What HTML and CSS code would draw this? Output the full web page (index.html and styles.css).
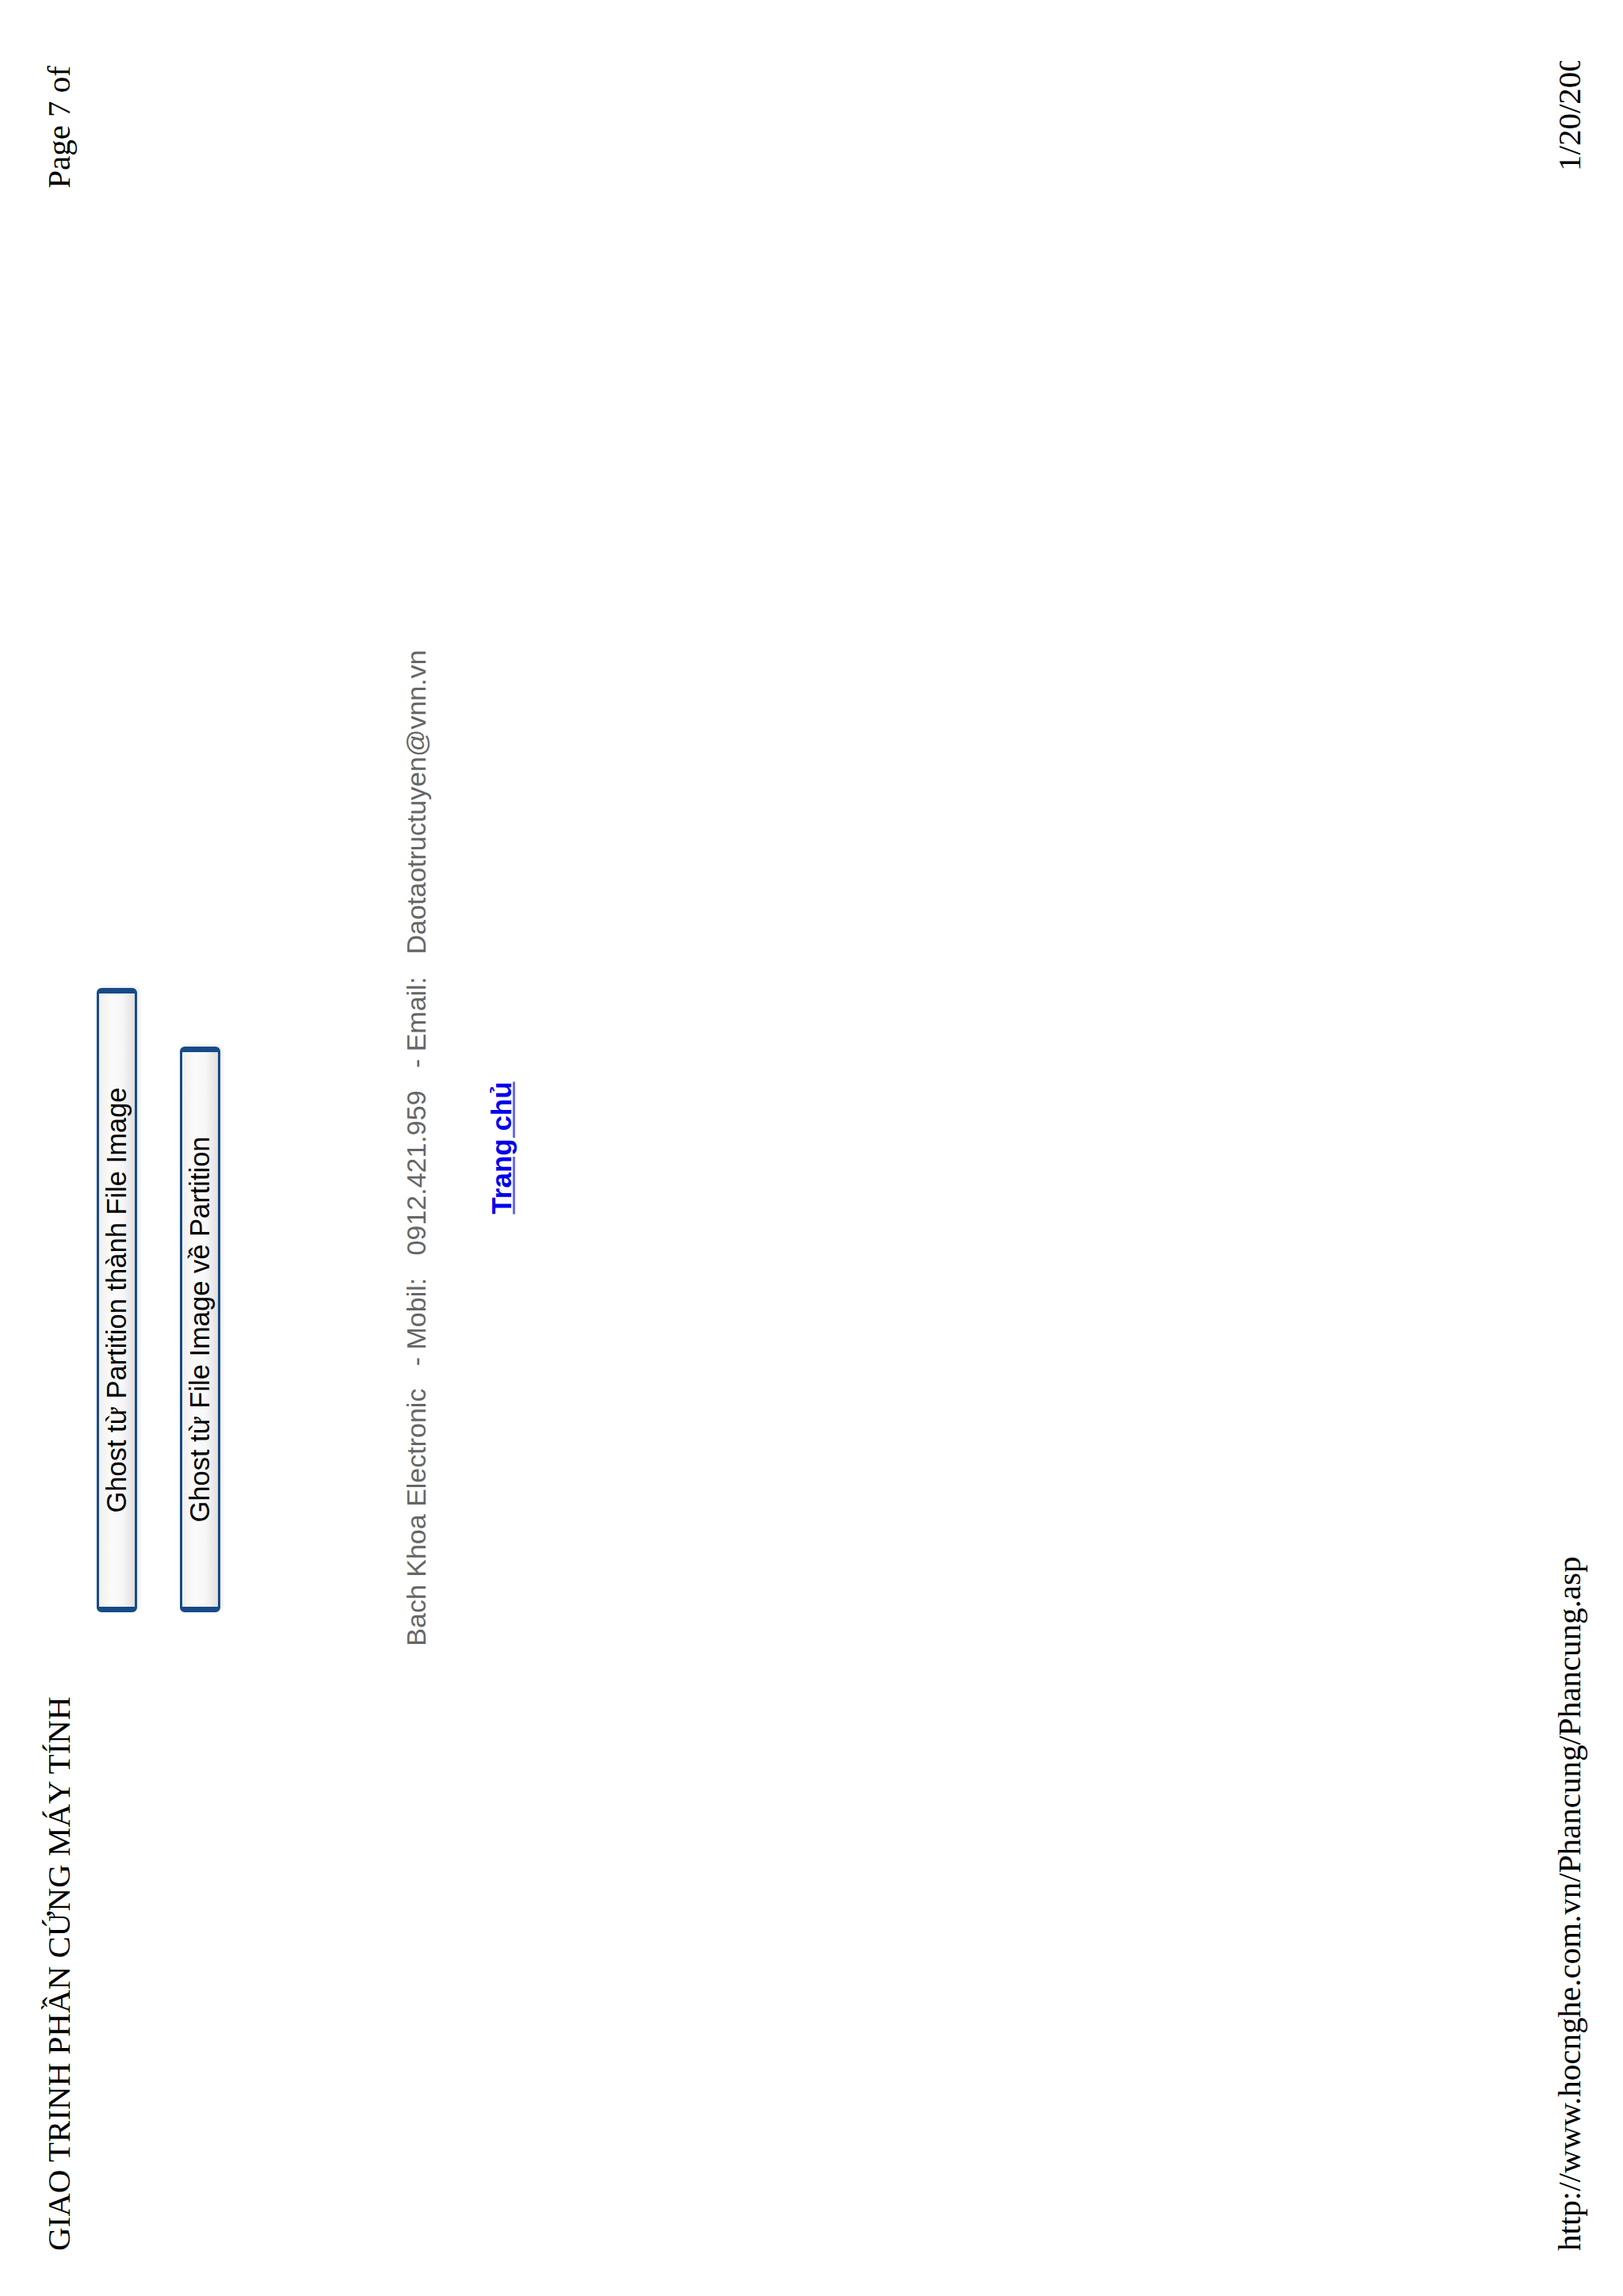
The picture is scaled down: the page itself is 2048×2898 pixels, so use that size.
FILE: index.html
```html
<!DOCTYPE html>
<html lang="vi">
<head>
<meta charset="utf-8">
<title>GIAO TRINH PHẦN CỨNG MÁY TÍNH</title>
<link rel="stylesheet" href="styles.css">
</head>
<body>
<div class="page">
  <header class="print-head">
    <span class="doc-title">GIAO TRINH PHẦN CỨNG MÁY TÍNH</span>
    <span class="page-no">Page 7 of</span>
  </header>
  <main class="content">
    <div class="nav-buttons">
      <button class="ghost-btn btn-1" type="button">Ghost từ Partition thành File Image</button>
      <button class="ghost-btn btn-2" type="button">Ghost từ File Image về Partition</button>
    </div>
    <p class="contact">Bach Khoa Electronic &nbsp; - Mobil: &nbsp; 0912.421.959 &nbsp; - Email: &nbsp; Daotaotructuyen@vnn.vn</p>
    <p class="home"><a href="#">Trang chủ</a></p>
  </main>
  <footer class="print-foot">
    <span class="url">http://www.hocnghe.com.vn/Phancung/Phancung.asp</span>
    <span class="date"><span class="date-text">1/20/2009</span></span>
  </footer>
</div>
</body>
</html>
```
FILE: styles.css
```css
html, body {
  margin: 0;
  padding: 0;
  background: #ffffff;
}
body {
  width: 2048px;
  height: 2898px;
  overflow: hidden;
}
.page {
  width: 2898px;
  height: 2048px;
  transform-origin: 0 0;
  transform: translateY(2898px) rotate(-90deg);
  display: flex;
  flex-direction: column;
  background: #ffffff;
}
.print-head {
  display: flex;
  justify-content: space-between;
  padding: 51px 83px 0 57px;
  font-family: "Liberation Serif", "Times New Roman", serif;
  font-size: 41px;
  line-height: 46px;
  color: #000;
}
.content {
  flex: 1;
  padding-top: 25px;
  font-family: "Liberation Sans", Arial, sans-serif;
}
.nav-buttons {
  width: 1172px;
  margin: 0 auto;
  display: flex;
  flex-direction: column;
  align-items: flex-start;
  gap: 54px;
}
.ghost-btn {
  box-sizing: border-box;
  height: 51px;
  padding: 0;
  font-family: "Liberation Sans", Arial, sans-serif;
  font-size: 34.5px;
  line-height: 1;
  color: #000;
  border: 3px solid #174b88;
  border-left-width: 7px;
  border-right-width: 7px;
  border-radius: 6px;
  background: linear-gradient(to bottom, #efefed 0%, #fbfbfb 35%, #f8f7f7 65%, #e2dede 100%);
  box-shadow: 2px 3px 4px rgba(0, 0, 0, 0.08);
}
.btn-1 { width: 788px; }
.btn-2 { width: 714px; }
.contact {
  margin: 228px 0 0;
  text-align: center;
  white-space: nowrap;
  font-size: 34px;
  line-height: 38px;
  color: #666666;
}
.home {
  margin: 70px 0 0;
  text-align: center;
  font-size: 35px;
  line-height: 38px;
  font-weight: bold;
}
.home a {
  color: #0000ee;
  text-decoration: underline;
  text-decoration-color: #6a6af0;
}
.print-foot {
  display: flex;
  justify-content: space-between;
  padding: 0 77px 45px 57px;
  font-family: "Liberation Serif", "Times New Roman", serif;
  font-size: 41px;
  line-height: 46px;
  color: #000;
}
.date {
  display: block;
  width: 139px;
  overflow: hidden;
  white-space: nowrap;
}
```
